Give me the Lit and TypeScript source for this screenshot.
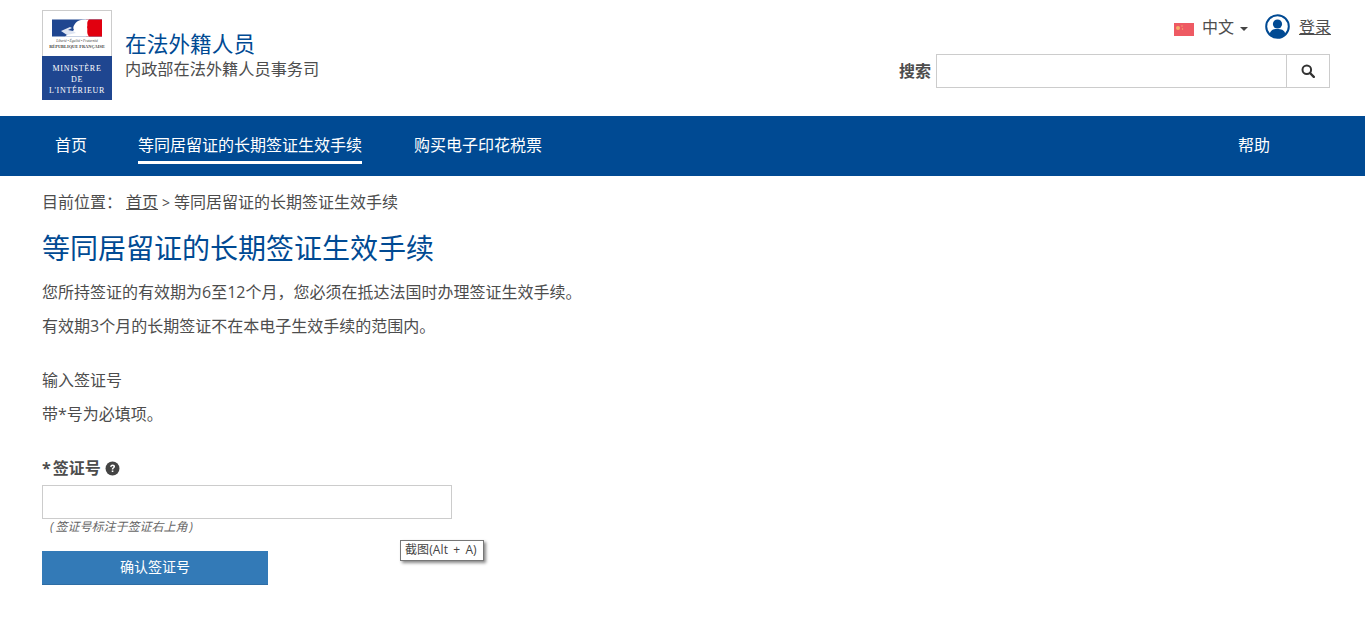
import { LitElement, html, css } from "lit";
import { customElement } from "lit/decorators.js";

@customElement("app-root")
export class AppRoot extends LitElement {
  static styles = css`
    :host { display: block; position: relative; height: 627px; background: #fff; color: #4d4d4d; overflow: hidden;
      font-family: "Open Sans", "Noto Sans CJK SC", sans-serif; font-size: 16px; line-height: 24px; }
    * { box-sizing: border-box; }
    a { color: inherit; }
    .header { height: 116px; display: flex; justify-content: space-between; padding: 10px 34px 0 42px; }
    .brand { display: flex; gap: 13px; }
    .logo { width: 70px; height: 90px; display: flex; flex-direction: column; border: 1px solid #ccc; }
    .logo-top { height: 45px; background: #fff; flex: none; display: flex; justify-content: center; }
    .logo-bottom { flex: 1; margin: 0 -1px -1px; background: #1f4690; color: #fff; font-family: "Liberation Serif", serif;
      font-size: 8px; line-height: 11px; letter-spacing: .7px; text-align: center; padding-top: 7px; }
    .logo-text { font-family: "Liberation Serif", serif; fill: #444; }
    .brand-text { padding-top: 19px; }
    .title { font-size: 21.7px; line-height: 30px; color: #004a93; }
    .sub { font-size: 16.2px; line-height: 20px; }
    .right { display: flex; flex-direction: column; align-items: flex-end; }
    .tools { display: flex; align-items: center; height: 32px; margin-top: 1px; }
    .flag { width: 20px; height: 13px; margin-right: 8px; margin-top: 5px; }
    .lang { display: flex; align-items: center; gap: 6px; }
    .caret { width: 0; height: 0; border-left: 4px solid transparent; border-right: 4px solid transparent; border-top: 4px solid #444; margin-top: 3px; }
    .user { width: 25px; height: 25px; margin: -1px 9px 0 17px; }
    .search { display: flex; align-items: center; margin-top: 11px; margin-right: 1px; }
    .search-label { font-weight: 700; margin-right: 5px; }
    .search-box { width: 351px; height: 34px; border: 1px solid #ccc; }
    .search-btn { width: 43px; height: 34px; border: 1px solid #ccc; border-left: 0; display: flex; align-items: center; justify-content: center; background: #fff; }
    .nav { height: 60px; background: #004a93; color: #fff; display: flex; align-items: flex-start; padding: 0 95px 0 55px; gap: 51px; }
    .nav-item { padding: 17px 0 0; height: 48px; }
    .nav-item.active { border-bottom: 3px solid #fff; margin-right: 1px; }
    .nav-item.help { margin-left: auto; }
    .main { padding: 14px 42px 0; }
    .crumb { display: flex; height: 24px; align-items: baseline; }
    .crumb a { margin-left: 4px; margin-right: 4px; }
    .crumb .sep { font-size: 14px; margin-right: 4px; }
    h1 { margin: 14px 0 0; font-size: 28px; line-height: 40px; font-weight: 400; color: #004a93; }
    p { margin: 0; height: 24px; }
    .p1 { margin-top: 12px; }
    .p2 { margin-top: 10px; }
    .p3 { margin-top: 30px; }
    .p4 { margin-top: 10px; }
    .label { margin-top: 30px; font-weight: 700; display: flex; align-items: center; height: 24px; gap: 2px; }
    .label svg { margin-left: 2px; }
    .field { display: block; width: 410px; height: 34px; border: 1px solid #ccc; margin-top: 5px; background: #fff; }
    .hint { font-size: 12px; line-height: 16px; font-style: italic; color: #666; padding-left: 8px; }
    .btn { display: flex; align-items: center; justify-content: center; width: 226px; height: 34px; background: #337ab7;
      color: #fff; font-size: 14px; margin-top: 16px; border-bottom: 1px solid #2e6da4; padding-bottom: 2px; }
    .tip { position: absolute; left: 400px; top: 540px; width: 84px; height: 21px; border: 1px solid #777; background: #fff;
      color: #444; font-size: 12px; line-height: 18px; padding-left: 4px; box-shadow: 2px 2px 3px #888; white-space: nowrap; word-spacing: 2px; letter-spacing: .1px; }
  `;

  render() {
    return html`
      <div class="header">
        <div class="brand">
          <div class="logo">
            <div class="logo-top">
              <svg width="68" height="44" viewBox="0 0 68 44">
                <rect x="9" y="8.500" width="50" height="17" fill="#1f4690"></rect>
                <rect x="43" y="8.500" width="16" height="17" fill="#e1000f"></rect>
                <path d="M22 25.500 C26 22 29 21 31 19 C29 16 32 12 35 10 C37 8.500 41 8.500 46 8.500 C43 11 45 14 44 16 C45 19 43 22 46 25.500Z" fill="#fff"></path>
                <path d="M18 20 L27 16 L29 17 L25 19 L30 20 L33 22 L24 24Z" fill="#dfe5f2"></path>
                <text class="logo-text" x="34" y="30.500" text-anchor="middle" font-size="3.600" font-style="italic">Liberté • Égalité • Fraternité</text>
                <text class="logo-text" x="34" y="36.500" text-anchor="middle" font-size="4.400" font-weight="700">RÉPUBLIQUE FRANÇAISE</text>
              </svg>
            </div>
            <div class="logo-bottom">MINISTÈRE<br />DE<br />L'INTÉRIEUR</div>
          </div>
          <div class="brand-text">
            <div class="title">在法外籍人员</div>
            <div class="sub">内政部在法外籍人员事务司</div>
          </div>
        </div>
        <div class="right">
          <div class="tools">
            <svg class="flag" viewBox="0 0 20 13">
              <rect width="20" height="13" fill="#ee5a63"></rect>
              <circle cx="4" cy="5" r="2" fill="#f4b26a"></circle>
              <circle cx="8" cy="3" r=".7" fill="#f4b26a"></circle>
              <circle cx="8.500" cy="6" r=".7" fill="#f4b26a"></circle>
            </svg>
            <div class="lang">中文<span class="caret"></span></div>
            <svg class="user" viewBox="0 0 25 25">
              <circle cx="12.500" cy="12.500" r="11.300" fill="#fff" stroke="#004a93" stroke-width="2"></circle>
              <circle cx="12.500" cy="10" r="4.600" fill="#004a93"></circle>
              <path d="M4.500 20 C6 15.500 9 15 12.500 15 C16 15 19 15.500 20.500 20 C18.500 22.500 15.500 23.500 12.500 23.500 C9.500 23.500 6.500 22.500 4.500 20Z" fill="#004a93"></path>
            </svg>
            <a href="#">登录</a>
          </div>
          <div class="search">
            <span class="search-label">搜索</span>
            <div class="search-box"></div>
            <div class="search-btn">
              <svg width="14" height="14" viewBox="0 0 14 14">
                <circle cx="5.800" cy="5.800" r="4.300" fill="none" stroke="#333" stroke-width="2"></circle>
                <path d="M9 9 L12.800 12.800" stroke="#333" stroke-width="2.400" stroke-linecap="round"></path>
              </svg>
            </div>
          </div>
        </div>
      </div>
      <nav class="nav">
        <div class="nav-item">首页</div>
        <div class="nav-item active">等同居留证的长期签证生效手续</div>
        <div class="nav-item">购买电子印花税票</div>
        <div class="nav-item help">帮助</div>
      </nav>
      <div class="main">
        <div class="crumb">目前位置：<a href="#">首页</a><span class="sep">&gt;</span>等同居留证的长期签证生效手续</div>
        <h1>等同居留证的长期签证生效手续</h1>
        <p class="p1">您所持签证的有效期为6至12个月，您必须在抵达法国时办理签证生效手续。</p>
        <p class="p2">有效期3个月的长期签证不在本电子生效手续的范围内。</p>
        <p class="p3">输入签证号</p>
        <p class="p4">带*号为必填项。</p>
        <div class="label"><span>*</span><span>签证号</span>
          <svg width="15" height="15" viewBox="0 0 14 14">
            <circle cx="7" cy="7" r="6.500" fill="#444"></circle>
            <path d="M4.800 5.400 C5 3.900 6 3.300 7.100 3.300 C8.500 3.300 9.400 4.200 9.400 5.200 C9.400 6.600 7.700 6.700 7.700 8 L6.300 8 C6.200 6.300 7.900 6.100 7.900 5.300 C7.900 4.800 7.500 4.600 7 4.600 C6.500 4.600 6.200 5 6 5.800Z M6.300 8.800 H7.800 V10.300 H6.300Z" fill="#fff"></path>
          </svg>
        </div>
        <div class="field"></div>
        <div class="hint">(&#8201;签证号标注于签证右上角&#8201;)</div>
        <div class="btn">确认签证号</div>
      </div>
      <div class="tip">截图(Alt + A)</div>
    `;
  }
}
